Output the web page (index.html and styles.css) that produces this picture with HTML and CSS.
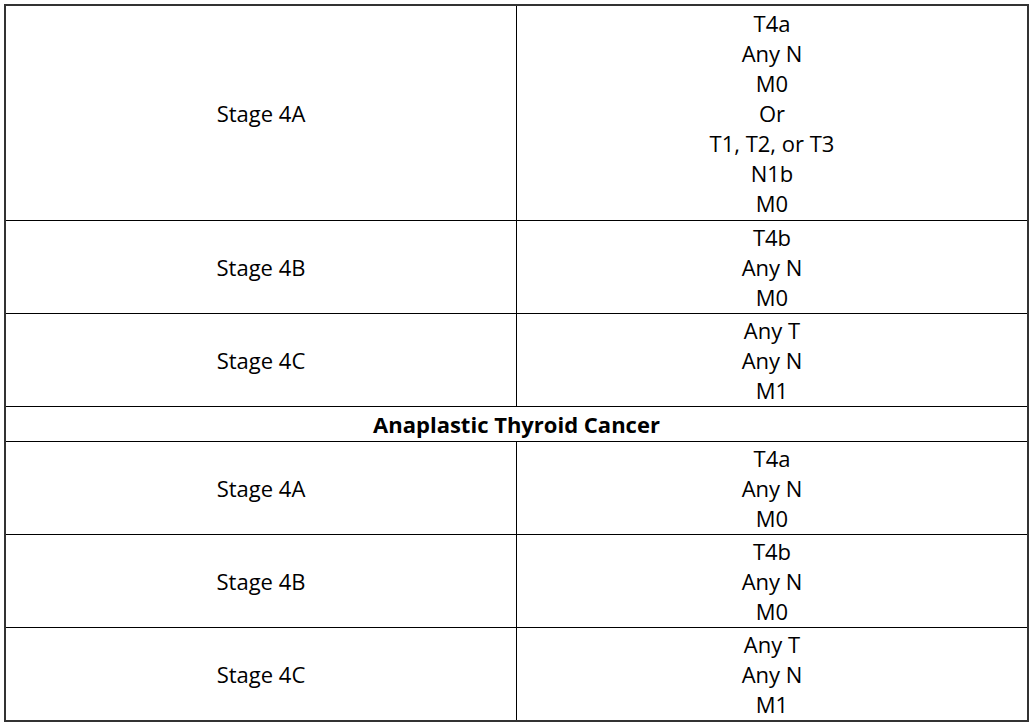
FILE: index.html
```html
<!DOCTYPE html>
<html lang="en">
<head>
<meta charset="utf-8">
<title>Thyroid Cancer Staging</title>
<link rel="stylesheet" href="styles.css">
</head>
<body>
<table class="stage-table">
  <colgroup><col class="col-stage"><col class="col-tnm"></colgroup>
  <tbody>
    <tr>
      <td class="stage">Stage 4A</td>
      <td class="tnm tnm-long">T4a<br>Any N<br>M0<br>Or<br>T1, T2, or T3<br>N1b<br>M0</td>
    </tr>
    <tr>
      <td class="stage">Stage 4B</td>
      <td class="tnm">T4b<br>Any N<br>M0</td>
    </tr>
    <tr>
      <td class="stage">Stage 4C</td>
      <td class="tnm">Any T<br>Any N<br>M1</td>
    </tr>
    <tr>
      <th class="section" colspan="2">Anaplastic Thyroid Cancer</th>
    </tr>
    <tr>
      <td class="stage">Stage 4A</td>
      <td class="tnm">T4a<br>Any N<br>M0</td>
    </tr>
    <tr>
      <td class="stage">Stage 4B</td>
      <td class="tnm">T4b<br>Any N<br>M0</td>
    </tr>
    <tr>
      <td class="stage">Stage 4C</td>
      <td class="tnm">Any T<br>Any N<br>M1</td>
    </tr>
  </tbody>
</table>
</body>
</html>
```
FILE: styles.css
```css
html, body {
  margin: 0;
  padding: 0;
  background: #ffffff;
}

body {
  padding: 4px 0 0 4px;
  font-family: "Open Sans", "Noto Sans", "Liberation Sans", sans-serif;
  font-size: 22px;
  color: #000000;
}

.stage-table {
  width: 1025px;
  border-collapse: collapse;
  table-layout: fixed;
  border: 2px solid #333333;
}

.col-stage { width: 50%; }
.col-tnm { width: 50%; }

.stage-table td,
.stage-table th {
  border: 1px solid #000000;
  text-align: center;
  vertical-align: middle;
  line-height: 30px;
  padding: 1px 4px;
  font-weight: 400;
}

.stage-table td.tnm-long {
  padding: 2px 4px;
}

.stage-table th.section {
  font-weight: 700;
  padding: 2px 4px;
}
```
